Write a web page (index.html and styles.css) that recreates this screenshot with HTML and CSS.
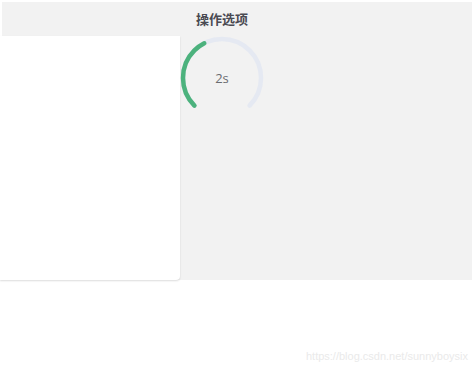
FILE: index.html
```html
<!DOCTYPE html>
<html>
<head>
<meta charset="utf-8">
<link rel="stylesheet" href="styles.css">
</head>
<body>
<div class="stage">
  <div class="title">操作选项</div>
  <div class="content">
    <div class="panel"></div>
    <div class="progress">
      <svg width="84" height="84" viewBox="0 0 84 84">
        <path class="track" d="M14.42 69.58 A39 39 0 1 1 69.58 69.58" />
        <path class="bar" d="M14.42 69.58 A39 39 0 1 1 69.58 69.58" pathLength="270" stroke-dasharray="108 400" />
      </svg>
      <span class="label">2s</span>
    </div>
  </div>
</div>
<div class="watermark">https://blog.csdn.net/sunnyboysix</div>
</body>
</html>
```
FILE: styles.css
```css
html, body {
  margin: 0;
  padding: 0;
  background: #ffffff;
  font-family: "Noto Sans CJK SC", "Noto Sans", sans-serif;
}
.stage {
  margin: 2px 2px 0 2px;
  height: 278px;
  background: #f2f2f2;
  display: flex;
  flex-direction: column;
}
.title {
  height: 34px;
  line-height: 34px;
  padding-left: 194px;
  font-size: 13px;
  font-weight: bold;
  color: #4a4a52;
}
.content {
  flex: 1;
  display: flex;
  align-items: flex-start;
}
.panel {
  margin-left: -2px;
  width: 180px;
  height: 244px;
  background: #ffffff;
  border-radius: 0 0 4px 0;
  box-shadow: 0 1px 2px rgba(0, 0, 0, 0.14);
}
.progress {
  position: relative;
  width: 84px;
  height: 84px;
}
.progress svg {
  display: block;
}
.track {
  fill: none;
  stroke: #e5e9f2;
  stroke-width: 4.5;
  stroke-linecap: round;
}
.bar {
  fill: none;
  stroke: #4cb27d;
  stroke-width: 4.5;
  stroke-linecap: round;
}
.label {
  position: absolute;
  left: 0;
  right: 0;
  top: 0;
  line-height: 84px;
  text-align: center;
  font-family: "Open Sans", "Liberation Sans", sans-serif;
  font-size: 13px;
  color: #6a6c70;
}
.watermark {
  padding: 70px 6px 0 0;
  text-align: right;
  font-family: "Liberation Sans", sans-serif;
  font-size: 11px;
  color: #eaeaea;
}
```
